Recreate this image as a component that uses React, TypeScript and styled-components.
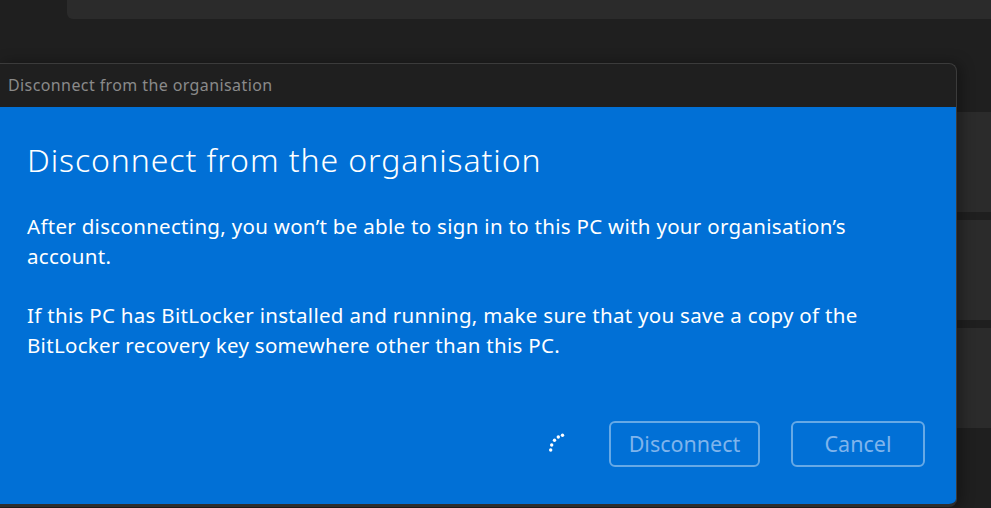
import React from 'react';
import styled, { createGlobalStyle } from 'styled-components';

const GlobalStyle = createGlobalStyle`
  html, body {
    margin: 0;
    padding: 0;
    background: #1f1f1f;
  }
  * {
    box-sizing: border-box;
  }
`;

const Page = styled.div`
  width: 991px;
  height: 508px;
  overflow: hidden;
  background: #1f1f1f;
  font-family: 'Noto Sans', 'Open Sans', sans-serif;
`;

const TopCard = styled.div`
  margin-left: 67px;
  height: 19px;
  background: #2b2b2b;
  border-bottom-left-radius: 6px;
`;

const Body = styled.div`
  display: grid;
  grid-template-columns: 957px 1fr;
  margin-top: 44px;
`;

const Dialog = styled.div`
  margin-left: -1px;
  height: 444px;
  display: flex;
  flex-direction: column;
  border: 1px solid #3b3b3b;
  border-bottom-width: 3px;
  border-bottom-color: #2e2e2e;
  border-radius: 0 8px 8px 0;
  overflow: hidden;
  background: #1f1f1f;
  box-shadow: 4px 0 14px rgba(0, 0, 0, 0.35);
  position: relative;
  z-index: 1;
`;

const TitleBar = styled.div`
  height: 43px;
  display: flex;
  align-items: center;
  padding-left: 8px;
  padding-bottom: 2px;
  font-size: 16px;
  color: #8a8a8a;
  letter-spacing: 0.4px;
`;

const Content = styled.div`
  flex: 1;
  background: #0170d6;
  display: flex;
  flex-direction: column;
  padding: 32px 0 0 27px;
  color: #ffffff;
`;

const Heading = styled.h1`
  margin: 0 0 30px;
  font-size: 32px;
  font-weight: 300;
  line-height: 42px;
  letter-spacing: 0.9px;
`;

const Paragraph = styled.p`
  margin: 0 0 29px;
  max-width: 860px;
  font-size: 20.5px;
  line-height: 30px;
  letter-spacing: 0.3px;
`;

const Actions = styled.div`
  margin-top: auto;
  margin-bottom: 37px;
  display: flex;
  align-items: center;
  justify-content: flex-end;
  gap: 31px;
  padding-right: 31px;
`;

const Spinner = styled.svg`
  width: 20px;
  height: 20px;
  margin-right: 11px;
  margin-bottom: 4px;
`;

const Button = styled.button<{ $width: number }>`
  width: ${(p) => p.$width}px;
  height: 46px;
  background: transparent;
  border: 2px solid rgba(255, 255, 255, 0.4);
  border-radius: 6px;
  color: #7fb4ec;
  font-family: inherit;
  font-size: 21.5px;
  padding: 0 0 2px;
`;

const SideColumn = styled.div`
  display: flex;
  flex-direction: column;
  gap: 8px;
  padding-top: 49px;
`;

const SideCard = styled.div`
  height: 100px;
  background: #2b2b2b;
`;

const dots = [
  [15.5, 3.3, 1.7],
  [11.3, 5, 1.7],
  [7.5, 8.3, 1.7],
  [4.7, 13, 1.7],
  [3.7, 18, 1.7],
];

export default function App() {
  return (
    <Page>
      <GlobalStyle />
      <TopCard />
      <Body>
        <Dialog>
          <TitleBar>Disconnect from the organisation</TitleBar>
          <Content>
            <Heading>Disconnect from the organisation</Heading>
            <Paragraph>
              After disconnecting, you won’t be able to sign in to this PC with your organisation’s account.
            </Paragraph>
            <Paragraph>
              If this PC has BitLocker installed and running, make sure that you save a copy of the BitLocker recovery key somewhere other than this PC.
            </Paragraph>
            <Actions>
              <Spinner viewBox="0 0 20 20">
                {dots.map(([cx, cy, r], i) => (
                  <circle key={i} cx={cx} cy={cy} r={r} fill="#ffffff" />
                ))}
              </Spinner>
              <Button $width={151} disabled>Disconnect</Button>
              <Button $width={134} disabled>Cancel</Button>
            </Actions>
          </Content>
        </Dialog>
        <SideColumn>
          <SideCard />
          <SideCard />
          <SideCard />
        </SideColumn>
      </Body>
    </Page>
  );
}
